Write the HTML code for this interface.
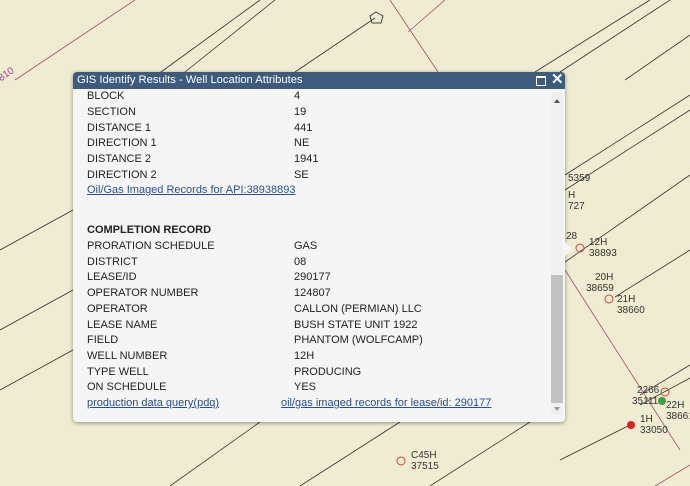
<!DOCTYPE html>
<html><head><meta charset="utf-8"><style>
body{margin:0;width:690px;height:486px;overflow:hidden;background:#efecd2;font-family:"Liberation Sans",sans-serif;position:relative}
svg.map{position:absolute;left:0;top:0}
.dlg{position:absolute;left:73px;top:72px;width:492px;height:350px;background:#f5f5f5;border-radius:4px;box-shadow:0 1px 4px rgba(0,0,0,.4);overflow:hidden}
.hd{height:17px;background:#3e5b7e;color:#fff;font-size:11.2px;line-height:17px;padding-left:4px}
.r{position:absolute;font-size:11px;color:#222;white-space:nowrap}
a{color:#2a4f8c;text-decoration:underline}
.sb{position:absolute;left:478px;top:20px;width:12px;height:322px;background:#f0f0f0}
.th{position:absolute;left:478px;top:203px;width:12px;height:128px;background:#c1c1c1}
.lbl{position:absolute;font-size:10px;color:#333;line-height:11px}
</style></head><body>
<svg class="map" width="690" height="486">
<g stroke="#333" stroke-width="0.8" fill="none">
<line x1="150" y1="80" x2="260" y2="0"/>
<line x1="175" y1="80" x2="275" y2="0"/>
<line x1="295" y1="72" x2="375" y2="18"/>
<line x1="535" y1="72" x2="650" y2="0"/>
<line x1="560" y1="72" x2="670" y2="0"/>
<line x1="625" y1="80" x2="690" y2="35"/>
<line x1="565" y1="175" x2="690" y2="95"/>
<line x1="565" y1="190" x2="690" y2="110"/>
<line x1="565" y1="262" x2="690" y2="175"/>
<line x1="615" y1="297" x2="690" y2="250"/>
<line x1="640" y1="395" x2="690" y2="365"/>
<line x1="640" y1="405" x2="690" y2="378"/>
<line x1="560" y1="460" x2="630" y2="425"/>
<line x1="0" y1="390" x2="73" y2="350"/>
<line x1="0" y1="330" x2="73" y2="290"/>
<line x1="0" y1="250" x2="73" y2="210"/>
<line x1="170" y1="486" x2="260" y2="422"/>
<line x1="300" y1="486" x2="400" y2="422"/>
<line x1="430" y1="486" x2="530" y2="422"/>
</g>
<g stroke="#a05070" stroke-width="0.8" fill="none">
<line x1="15" y1="80" x2="135" y2="0"/>
<line x1="390" y1="0" x2="438" y2="72"/>
<line x1="408" y1="32" x2="445" y2="0"/>
<line x1="565" y1="270" x2="680" y2="450"/>
<line x1="655" y1="486" x2="690" y2="465"/>
</g>
<polygon points="376,12 383,16 381,23 372,23 370,16" fill="none" stroke="#444"/>
<text x="-2" y="78" fill="#b0409a" font-size="10" transform="rotate(-35 5 75)" font-family="Liberation Sans">810</text>
<g fill="none" stroke="#d04040"><circle cx="580" cy="248" r="4"/><circle cx="609" cy="299" r="4"/><circle cx="665" cy="392" r="4"/><circle cx="401" cy="461" r="4"/></g>
<circle cx="662" cy="401" r="4" fill="#3aa040"/>
<circle cx="631" cy="425" r="4" fill="#e02020"/>
</svg>
<div class="lbl" style="left:568px;top:173px">5359</div>
<div class="lbl" style="left:568px;top:190px">H<br>727</div>
<div class="lbl" style="left:566px;top:231px">28</div>
<div class="lbl" style="left:589px;top:237px">12H<br>38893</div>
<div class="lbl" style="left:595px;top:272px">20H</div>
<div class="lbl" style="left:586px;top:283px">38659</div>
<div class="lbl" style="left:617px;top:294px">21H<br>38660</div>
<div class="lbl" style="left:637px;top:385px">2266</div>
<div class="lbl" style="left:632px;top:396px">35111</div>
<div class="lbl" style="left:666px;top:400px">22H<br>38661</div>
<div class="lbl" style="left:640px;top:414px">1H<br>33050</div>
<div class="lbl" style="left:411px;top:450px">C45H<br>37515</div>
<div class="dlg">
<div class="hd">GIS Identify Results - Well Location Attributes
<span style="position:absolute;left:463px;top:4px;width:8px;height:7px;border:1.5px solid #fff;border-top-width:2.5px"></span>
<span style="position:absolute;left:478px;top:-1px;font-size:15px;font-weight:bold">✕</span></div>
<div class="sb"></div><div class="th"></div>
<div style="position:absolute;left:481px;top:24px;width:0;height:0;border:3px solid transparent;border-bottom:4px solid #555"></div>
<div style="position:absolute;left:481px;top:335px;width:0;height:0;border:3px solid transparent;border-top:4px solid #999"></div>
<div class="r" style="left:14px;top:18px">BLOCK</div><div class="r" style="left:221px;top:18px">4</div>
<div class="r" style="left:14px;top:34px">SECTION</div><div class="r" style="left:221px;top:34px">19</div>
<div class="r" style="left:14px;top:50px">DISTANCE 1</div><div class="r" style="left:221px;top:50px">441</div>
<div class="r" style="left:14px;top:65px">DIRECTION 1</div><div class="r" style="left:221px;top:65px">NE</div>
<div class="r" style="left:14px;top:81px">DISTANCE 2</div><div class="r" style="left:221px;top:81px">1941</div>
<div class="r" style="left:14px;top:97px">DIRECTION 2</div><div class="r" style="left:221px;top:97px">SE</div>
<div class="r" style="left:14px;top:112px"><a>Oil/Gas Imaged Records for API:38938893</a></div>
<div class="r" style="left:14px;top:152px;font-weight:bold">COMPLETION RECORD</div>
<div class="r" style="left:14px;top:168px">PRORATION SCHEDULE</div><div class="r" style="left:221px;top:168px">GAS</div>
<div class="r" style="left:14px;top:184px">DISTRICT</div><div class="r" style="left:221px;top:184px">08</div>
<div class="r" style="left:14px;top:199px">LEASE/ID</div><div class="r" style="left:221px;top:199px">290177</div>
<div class="r" style="left:14px;top:215px">OPERATOR NUMBER</div><div class="r" style="left:221px;top:215px">124807</div>
<div class="r" style="left:14px;top:231px">OPERATOR</div><div class="r" style="left:221px;top:231px">CALLON (PERMIAN) LLC</div>
<div class="r" style="left:14px;top:247px">LEASE NAME</div><div class="r" style="left:221px;top:247px">BUSH STATE UNIT 1922</div>
<div class="r" style="left:14px;top:262px">FIELD</div><div class="r" style="left:221px;top:262px">PHANTOM (WOLFCAMP)</div>
<div class="r" style="left:14px;top:278px">WELL NUMBER</div><div class="r" style="left:221px;top:278px">12H</div>
<div class="r" style="left:14px;top:294px">TYPE WELL</div><div class="r" style="left:221px;top:294px">PRODUCING</div>
<div class="r" style="left:14px;top:309px">ON SCHEDULE</div><div class="r" style="left:221px;top:309px">YES</div>
<div class="r" style="left:14px;top:325px"><a>production data query(pdq)</a></div><div class="r" style="left:208px;top:325px"><a>oil/gas imaged records for lease/id: 290177</a></div>
</div>
<div style="position:absolute;left:565px;top:242px;width:0;height:0;border-top:7px solid transparent;border-bottom:7px solid transparent;border-left:7px solid #f5f5f5"></div>
</body></html>
